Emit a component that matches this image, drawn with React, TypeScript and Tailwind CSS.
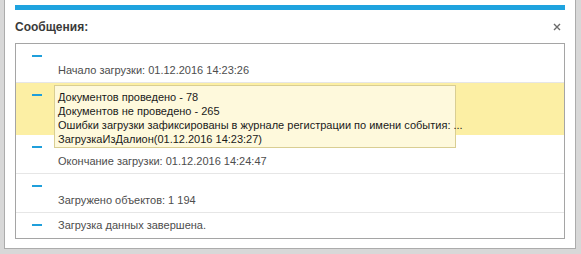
import React from "react";

type Message = {
  id: number;
  text: string;
};

const messages: Message[] = [
  { id: 1, text: "Начало загрузки: 01.12.2016 14:23:26" },
  { id: 3, text: "Окончание загрузки: 01.12.2016 14:24:47" },
  { id: 4, text: "Загружено объектов: 1 194" },
];

const tooltipLines = [
  "Документов проведено - 78",
  "Документов не проведено - 265",
  "Ошибки загрузки зафиксированы в журнале регистрации по имени события: ...",
  "ЗагрузкаИзДалион(01.12.2016 14:23:27)",
];

function Dash() {
  return <span className="block w-[10px] h-[2px] bg-[#1f9fdb]" />;
}

function MessageRow({ text }: { text: string }) {
  return (
    <div className="border-b border-[#e6e6e6] pt-[4px] pb-[4px]">
      <div className="h-[15px] flex items-center pl-[16px]">
        <Dash />
      </div>
      <div className="h-[15px] leading-[15px] pl-[42px] text-[#4d4d4d] whitespace-nowrap">
        {text}
      </div>
    </div>
  );
}

export default function App() {
  return (
    <div
      className="w-[581px] h-[254px] bg-[#d8d8d8] pl-[4px] pr-[5px] pb-[5px] flex"
      style={{ fontFamily: '"Liberation Sans", Arial, sans-serif' }}
    >
      <div className="flex-1 bg-white border-l border-r border-b border-[#acacac] px-[10px] flex flex-col">
        {/* Полоса сверху */}
        <div className="mt-[5px] h-[5px] bg-[#1fa3df]" />

        {/* Заголовок */}
        <div className="h-[33px] flex items-center justify-between">
          <span className="text-[12px] font-bold text-[#3a3a3a]">Сообщения:</span>
          <svg width="8" height="8" viewBox="0 0 8 8" className="mr-[4px] mt-[1px]">
            <path d="M1 1 L7 7 M7 1 L1 7" stroke="#6b6b6b" strokeWidth="1.4" />
          </svg>
        </div>

        {/* Список сообщений */}
        <div className="border border-[#a5a5a5] text-[11px] relative">
          <MessageRow text={messages[0].text} />

          {/* Выделенная строка с подсказкой */}
          <div className="h-[52px] bg-[#fcefa4] pt-[4px] relative">
            <div className="h-[15px] flex items-center pl-[16px]">
              <Dash />
            </div>
            <div className="absolute left-[38px] top-[2px] w-[402px] bg-[#fef9dc] border border-[#d9ce93] pl-[3px] pt-[4px] pb-[1px] z-10 text-[#1a1a1a] leading-[14px] whitespace-nowrap">
              {tooltipLines.map((line) => (
                <div key={line}>{line}</div>
              ))}
            </div>
          </div>

          <MessageRow text={messages[1].text} />
          <MessageRow text={messages[2].text} />

          <div className="pt-[4px] pb-[5px] flex items-center h-[25px]">
            <div className="w-[42px] pl-[16px]">
              <Dash />
            </div>
            <span className="leading-[15px] text-[#4d4d4d]">Загрузка данных завершена.</span>
          </div>
        </div>
      </div>
    </div>
  );
}
